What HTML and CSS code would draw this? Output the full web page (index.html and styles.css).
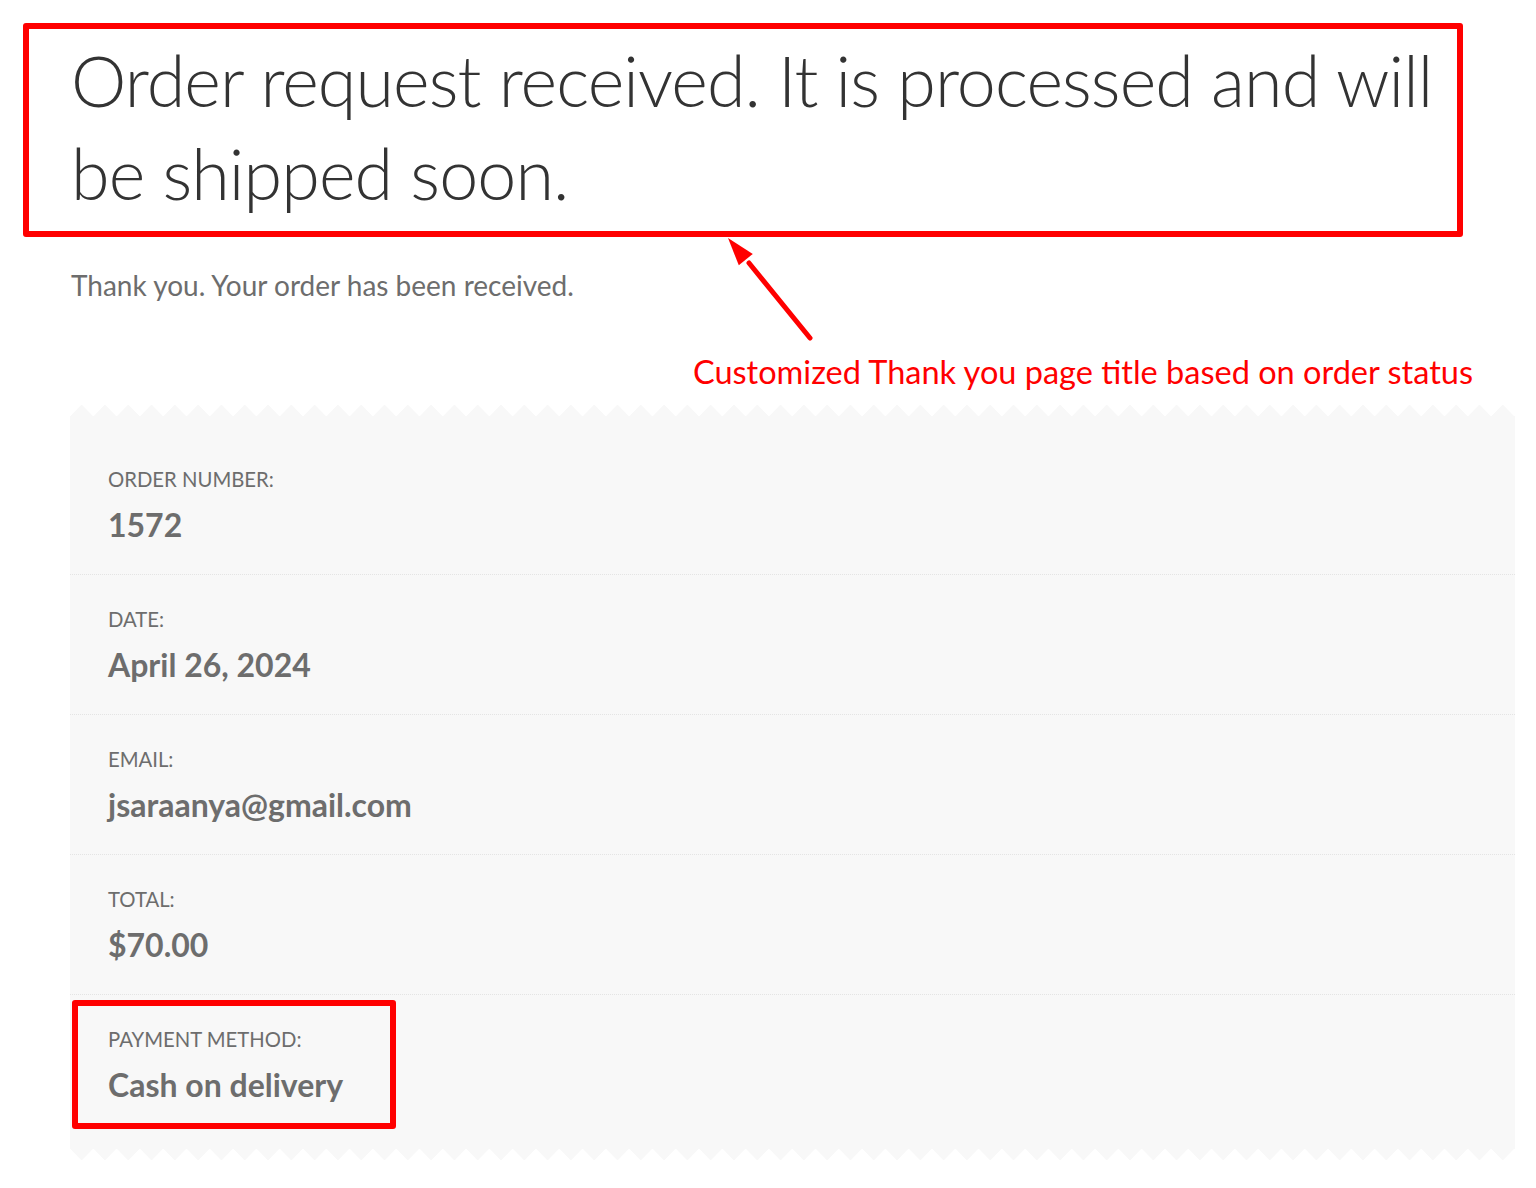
FILE: index.html
```html
<!DOCTYPE html>
<html lang="en">
<head>
<meta charset="utf-8">
<title>Order received</title>
<link rel="stylesheet" href="styles.css">
</head>
<body>
<div class="page">
  <div class="title-box">
    <h1 class="title">Order request received. It is processed and will be shipped soon.</h1>
  </div>
  <p class="thanks">Thank you. Your order has been received.</p>
  <p class="note">Customized Thank you page title based on order status</p>
  <svg class="arrow" width="120" height="120" viewBox="0 0 120 120" aria-hidden="true">
    <line x1="21" y1="25" x2="82" y2="100" stroke="#ff0000" stroke-width="5" stroke-linecap="round"/>
    <polygon points="0,0 24.8,15.9 10.8,27.3" fill="#ff0000"/>
  </svg>
  <div class="panel">
    <div class="teeth teeth-top"></div>
    <ul class="details">
      <li class="row"><span class="label">Order number:</span><strong class="value">1572</strong></li>
      <li class="row"><span class="label">Date:</span><strong class="value">April 26, 2024</strong></li>
      <li class="row"><span class="label">Email:</span><strong class="value">jsaraanya@gmail.com</strong></li>
      <li class="row"><span class="label">Total:</span><strong class="value">$70.00</strong></li>
      <li class="row row-last"><span class="label">Payment method:</span><strong class="value">Cash on delivery</strong><span class="highlight"></span></li>
    </ul>
    <div class="teeth teeth-bottom"></div>
  </div>
</div>
</body>
</html>
```
FILE: styles.css
```css
html, body {
  margin: 0;
  padding: 0;
  background: #ffffff;
}

body {
  font-family: Lato, "Source Sans Pro", "Open Sans", sans-serif;
  color: #6d6d6d;
}

.page {
  position: relative;
  width: 1536px;
  padding-top: 23px;
  padding-bottom: 26px;
}

.title-box {
  margin-left: 23px;
  width: 1440px;
  box-sizing: border-box;
  border: 6px solid #ff0000;
  border-radius: 3px;
  padding: 5px 20px 11px 42px;
}

.title {
  margin: 0;
  font-family: Lato, sans-serif;
  font-weight: 300;
  font-size: 70px;
  line-height: 93px;
  letter-spacing: -0.9px;
  color: #333333;
}

.thanks {
  margin: 28px 0 0 71px;
  font-size: 28px;
  line-height: 40px;
  color: #6d6d6d;
}

.note {
  margin: 47px 0 0 0;
  padding-right: 63px;
  text-align: right;
  font-size: 32.5px;
  line-height: 40px;
  color: #ff0000;
}

.arrow {
  position: absolute;
  left: 728px;
  top: 238px;
}

.panel {
  margin: 12px 21px 0 70px;
}

.teeth {
  height: 13px;
  background-size: 23.3px 13px;
  background-repeat: repeat-x;
}

.teeth-top {
  background-image: conic-gradient(from 138deg at 50% 0, #f8f8f8 84deg, transparent 0);
}

.teeth-bottom {
  background-image: conic-gradient(from -42deg at 50% 100%, #f8f8f8 84deg, transparent 0);
}

.details {
  list-style: none;
  margin: 0;
  padding: 18px 0 14px 0;
  background: #f8f8f8;
}

.row {
  position: relative;
  display: flex;
  flex-direction: column;
  gap: 12px;
  padding: 30px 0 29px 38px;
  border-bottom: 1px dotted #e4e4e4;
}

.row-last {
  border-bottom: none;
}

.label {
  font-size: 20.3px;
  line-height: 28px;
  text-transform: uppercase;
  color: #6d6d6d;
}

.value {
  font-size: 32px;
  line-height: 40px;
  font-weight: 700;
  color: #6d6d6d;
}

.highlight {
  position: absolute;
  left: 2px;
  top: 5px;
  width: 324px;
  height: 129px;
  box-sizing: border-box;
  border: 6px solid #ff0000;
  border-radius: 3px;
}
```
